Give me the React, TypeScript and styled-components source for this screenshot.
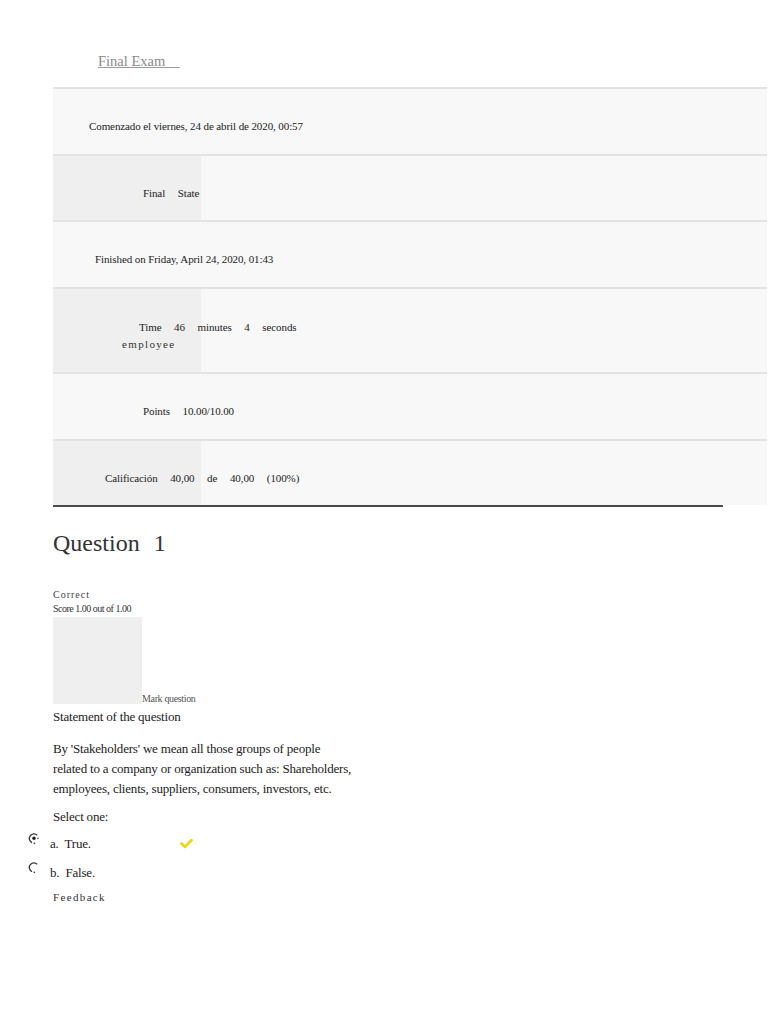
import React from 'react';
import styled, { createGlobalStyle } from 'styled-components';
import { FaCheck } from 'react-icons/fa';

const GlobalStyle = createGlobalStyle`
  html, body {
    margin: 0;
    padding: 0;
    background: #ffffff;
  }
  body {
    font-family: 'Liberation Serif', 'Times New Roman', serif;
    color: #222222;
  }
`;

const Page = styled.div`
  width: 768px;
  min-height: 1024px;
  background: #ffffff;
  overflow: hidden;
`;

const Header = styled.div`
  height: 87px;
  box-sizing: border-box;
  padding: 52px 0 0 98px;
`;

const ExamLink = styled.a`
  font-size: 14.5px;
  line-height: 17px;
  color: #8a8a8a;
  text-decoration: underline;
  text-decoration-color: #9a9a9a;
  white-space: pre;
`;

const Summary = styled.div`
  margin-left: 53px;
  width: 714px;
`;

const Row = styled.div<{ height: number }>`
  display: grid;
  grid-template-columns: 148px 1fr;
  height: ${(p) => p.height}px;
  box-sizing: border-box;
  border-top: 2px solid #e3e3e3;
  background: #f8f8f8;
`;

const Shade = styled.div`
  grid-area: 1 / 1 / 2 / 2;
  background: #efefef;
`;

const Content = styled.div`
  grid-area: 1 / 1 / 2 / 3;
  align-self: center;
  padding-top: 10px;
  display: flex;
  flex-direction: column;
`;

const Line = styled.div<{ indent: number; spaced?: boolean }>`
  padding-left: ${(p) => p.indent}px;
  font-size: 11px;
  line-height: 17px;
  letter-spacing: -0.1px;
  word-spacing: ${(p) => (p.spaced ? '10px' : '0')};
  color: #222222;
  white-space: nowrap;
`;

const WideLine = styled.div<{ indent: number }>`
  padding-left: ${(p) => p.indent}px;
  font-size: 11px;
  line-height: 17px;
  letter-spacing: 1.35px;
  color: #333333;
`;

const Rule = styled.div`
  margin-left: 53px;
  width: 670px;
  height: 2px;
  background: #4a4a4a;
`;

const Question = styled.section`
  padding-left: 53px;
`;

const Heading = styled.h2`
  margin: 22px 0 0;
  font-weight: normal;
  font-size: 24px;
  line-height: 28px;
  word-spacing: 8px;
  color: #333333;
`;

const Status = styled.div`
  margin-top: 31px;
  font-size: 10px;
  line-height: 13px;
  letter-spacing: 1px;
  color: #444444;
`;

const Score = styled.div`
  margin-top: 2px;
  font-size: 10px;
  line-height: 12px;
  letter-spacing: -0.5px;
  color: #333333;
`;

const FlagRow = styled.div`
  display: flex;
  align-items: flex-end;
  margin-top: 2px;
`;

const FlagBox = styled.div`
  width: 89px;
  height: 87px;
  background: #efefef;
`;

const FlagLabel = styled.span`
  font-size: 10px;
  line-height: 10px;
  letter-spacing: -0.35px;
  color: #555555;
`;

const Prompt = styled.div`
  margin-top: 5px;
  font-size: 13px;
  line-height: 16px;
  letter-spacing: -0.2px;
  color: #222222;
`;

const Statement = styled.p`
  margin: 14px 0 0;
  width: 304px;
  font-size: 13px;
  line-height: 20px;
  letter-spacing: -0.2px;
  color: #222222;
`;

const SelectOne = styled.div`
  margin-top: 8px;
  font-size: 13px;
  line-height: 20px;
  letter-spacing: -0.2px;
  color: #222222;
`;

const Options = styled.div`
  margin: 3px 0 0 -25px;
`;

const Option = styled.div`
  display: flex;
  align-items: flex-start;
  height: 29px;
`;

const RadioIcon = styled.svg`
  width: 12px;
  height: 13px;
  margin-top: 2px;
  flex: none;
`;

const OptionText = styled.span`
  margin-left: 10px;
  font-size: 13px;
  line-height: 28px;
  letter-spacing: -0.2px;
  color: #222222;
  white-space: pre;
`;

const Tick = styled(FaCheck)`
  width: 15px;
  height: 13px;
  margin: 7px 0 0 88px;
  color: #ecd60b;
`;

const Feedback = styled.div`
  margin-top: 2px;
  font-size: 11px;
  line-height: 14px;
  letter-spacing: 1.35px;
  color: #333333;
`;

function Radio({ checked }: { checked?: boolean }) {
  return (
    <RadioIcon viewBox='0 0 12 13'>
      <path d='M9.2 3.2 A4.6 4.6 0 1 0 4 10.6' fill='none' stroke='#333' strokeWidth='1.3' />
      <rect x='5.6' y='10.6' width='1.5' height='1.5' fill='#444' />
      {checked && <circle cx='6' cy='6.3' r='1.7' fill='#222' />}
      {checked && <rect x='9.2' y='5.6' width='1.3' height='1.5' fill='#555' />}
    </RadioIcon>
  );
}

export default function App() {
  return (
    <Page>
      <GlobalStyle />
      <Header>
        <ExamLink href='#'>{'Final Exam\u00a0\u00a0\u00a0\u00a0'}</ExamLink>
      </Header>

      <Summary>
        <Row height={67}>
          <Content>
            <Line indent={36}>Comenzado el viernes, 24 de abril de 2020, 00:57</Line>
          </Content>
        </Row>
        <Row height={66}>
          <Shade />
          <Content>
            <Line indent={90} spaced>
              Final State
            </Line>
          </Content>
        </Row>
        <Row height={67}>
          <Content>
            <Line indent={42}>Finished on Friday, April 24, 2020, 01:43</Line>
          </Content>
        </Row>
        <Row height={85}>
          <Shade />
          <Content>
            <Line indent={86} spaced>
              Time 46 minutes 4 seconds
            </Line>
            <WideLine indent={69}>employee</WideLine>
          </Content>
        </Row>
        <Row height={67}>
          <Content>
            <Line indent={90} spaced>
              Points 10.00/10.00
            </Line>
          </Content>
        </Row>
        <Row height={66}>
          <Shade />
          <Content>
            <Line indent={52} spaced>
              Calificación 40,00 de 40,00 (100%)
            </Line>
          </Content>
        </Row>
      </Summary>
      <Rule />

      <Question>
        <Heading>Question 1</Heading>
        <Status>Correct</Status>
        <Score>Score 1.00 out of 1.00</Score>
        <FlagRow>
          <FlagBox />
          <FlagLabel>Mark question</FlagLabel>
        </FlagRow>
        <Prompt>Statement of the question</Prompt>
        <Statement>
          By 'Stakeholders' we mean all those groups of people related to a company or
          organization such as: Shareholders, employees, clients, suppliers, consumers,
          investors, etc.
        </Statement>
        <SelectOne>Select one:</SelectOne>
        <Options>
          <Option>
            <Radio checked />
            <OptionText>{'a.  True.'}</OptionText>
            <Tick />
          </Option>
          <Option>
            <Radio />
            <OptionText>{'b.  False.'}</OptionText>
          </Option>
        </Options>
        <Feedback>Feedback</Feedback>
      </Question>
    </Page>
  );
}
